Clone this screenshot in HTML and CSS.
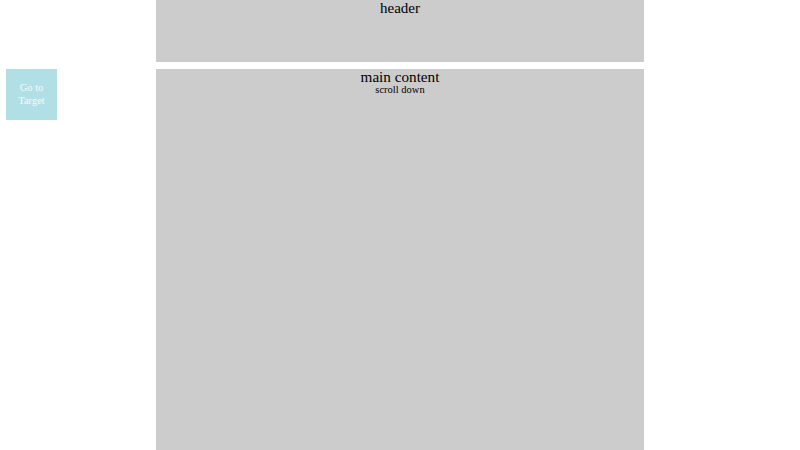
FILE: index.html
```html
<!DOCTYPE html>
<html>
<head>
<meta charset="utf-8">
<link rel="stylesheet" href="styles.css">
</head>
<body>
<div class="page">
  <header class="header">header</header>
  <main class="main">
    <div class="main-title">main content</div>
    <div class="main-sub">scroll down</div>
  </main>
</div>
<button class="goto">Go to Target</button>
</body>
</html>
```
FILE: styles.css
```css
html, body {
  margin: 0;
  padding: 0;
  background: #ffffff;
  font-family: "Liberation Serif", "Times New Roman", serif;
  color: #000;
}
.page {
  width: 488px;
  margin: 0 auto;
  display: flex;
  flex-direction: column;
  gap: 7px;
}
.header {
  height: 62px;
  background: #cccccc;
  text-align: center;
  font-size: 15px;
  line-height: 16px;
}
.main {
  height: 500px;
  background: #cccccc;
  text-align: center;
}
.main-title {
  font-size: 15.2px;
  line-height: 15px;
}
.main-sub {
  font-size: 10.5px;
  line-height: 11px;
}
.goto {
  position: fixed;
  left: 6px;
  top: 69px;
  width: 51px;
  height: 51px;
  border: none;
  padding: 0 6px;
  background: #b0e0e6;
  color: #f2fafb;
  font-family: "Liberation Serif", "Times New Roman", serif;
  font-size: 10.5px;
  line-height: 12.5px;
  text-align: center;
}
```
